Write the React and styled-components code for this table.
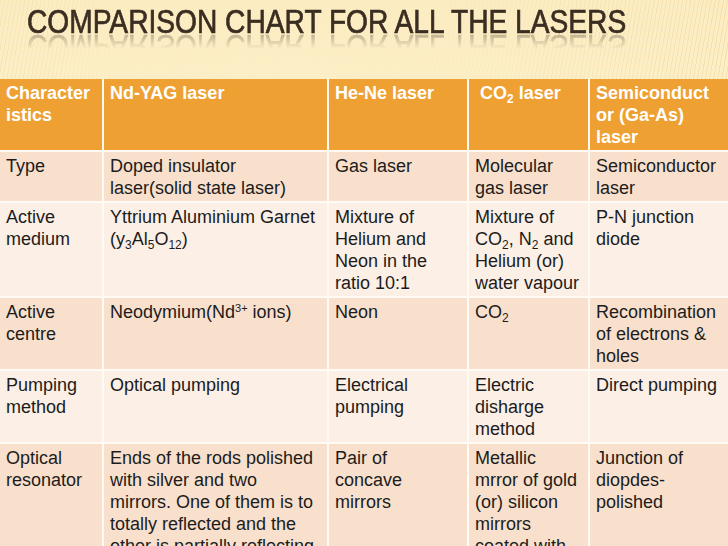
import React from "react";
import styled, { createGlobalStyle } from "styled-components";

const GlobalStyle = createGlobalStyle`
  html, body { margin: 0; padding: 0; }
  body {
    background: #fdf2ca;
    overflow: hidden;
    font-family: "Liberation Sans", Arial, sans-serif;
  }
`;

const Slide = styled.div`
  width: 728px;
  height: 546px;
  overflow: hidden;
  display: flex;
  flex-direction: column;
  background: linear-gradient(180deg, #fcecc2 0%, #fdf2cc 40%, #fdf3cf 100%);
`;

const TitleBar = styled.header`
  position: relative;
  height: 79px;
  flex: none;
  box-sizing: border-box;
  padding: 4px 0 0 27px;
  overflow: hidden;

  &::before {
    content: "";
    position: absolute;
    inset: 0;
    background: repeating-linear-gradient(
      100deg,
      rgba(222, 186, 112, 0.3) 0 1px,
      transparent 1px 4px
    );
    -webkit-mask-image: linear-gradient(
      90deg,
      rgba(0, 0, 0, 0.6) 0%,
      rgba(0, 0, 0, 0.1) 14%,
      rgba(0, 0, 0, 0) 40%,
      rgba(0, 0, 0, 0.15) 66%,
      rgba(0, 0, 0, 0.8) 100%
    );
    mask-image: linear-gradient(
      90deg,
      rgba(0, 0, 0, 0.6) 0%,
      rgba(0, 0, 0, 0.1) 14%,
      rgba(0, 0, 0, 0) 40%,
      rgba(0, 0, 0, 0.15) 66%,
      rgba(0, 0, 0, 0.8) 100%
    );
  }
`;

const Title = styled.h1`
  position: relative;
  display: inline-block;
  margin: 0;
  font-family: "Liberation Sans", Arial, sans-serif;
  font-weight: 400;
  font-size: 34px;
  line-height: 34px;
  color: #3a2d21;
  -webkit-text-stroke: 0.7px #3a2d21;
  white-space: nowrap;
  transform: scaleX(0.828);
  transform-origin: left top;
  -webkit-box-reflect: below -8px
    linear-gradient(transparent 45%, rgba(0, 0, 0, 0.4));
`;

const Table = styled.table`
  width: 728px;
  table-layout: fixed;
  border-collapse: separate;
  border-spacing: 0;
  flex: none;
`;

const Col = styled.col`
  width: ${(p) => p.$w}px;
`;

const Row = styled.tr`
  background: ${(p) =>
    p.$kind === "head" ? "#efa033" : p.$kind === "dark" ? "#f8e0cd" : "#fbefe6"};
`;

const Cell = styled.td`
  box-sizing: border-box;
  vertical-align: top;
  padding: 3px 4px 2px 6px;
  border-bottom: 2px solid #fffaf4;
  border-left: 2px solid #fffaf4;
  font-size: 18px;
  line-height: 22px;
  color: #1c1c1c;
  font-weight: 400;

  &:first-child {
    border-left: none;
  }
`;

const HeadCell = styled(Cell).attrs({ as: "th" })`
  text-align: left;
  color: #ffffff;
  font-weight: 700;
`;

const Sub = styled.sub`
  font-size: 12px;
  line-height: 0;
  vertical-align: -4px;
`;

const Sup = styled.sup`
  font-size: 11px;
  line-height: 0;
  vertical-align: 6px;
`;

const widths = [102, 225, 140, 121, 140];

const rows = [
  {
    kind: "dark",
    cells: [
      <>Type</>,
      <>Doped insulator<br />laser(solid state laser)</>,
      <>Gas laser</>,
      <>Molecular<br />gas laser</>,
      <>Semiconductor<br />laser</>,
    ],
  },
  {
    kind: "light",
    cells: [
      <>Active<br />medium</>,
      <>
        Yttrium Aluminium Garnet<br />(y<Sub>3</Sub>Al<Sub>5</Sub>O<Sub>12</Sub>)
      </>,
      <>Mixture of<br />Helium and<br />Neon in the<br />ratio 10:1</>,
      <>
        Mixture of<br />CO<Sub>2</Sub>, N<Sub>2</Sub> and<br />Helium (or)<br />water vapour
      </>,
      <>P-N junction<br />diode</>,
    ],
  },
  {
    kind: "dark",
    cells: [
      <>Active<br />centre</>,
      <>Neodymium(Nd<Sup>3+</Sup> ions)</>,
      <>Neon</>,
      <>CO<Sub>2</Sub></>,
      <>Recombination<br />of electrons &amp;<br />holes</>,
    ],
  },
  {
    kind: "light",
    cells: [
      <>Pumping<br />method</>,
      <>Optical pumping</>,
      <>Electrical<br />pumping</>,
      <>Electric<br />disharge<br />method</>,
      <>Direct pumping</>,
    ],
  },
  {
    kind: "dark",
    cells: [
      <>Optical<br />resonator</>,
      <>
        Ends of the rods polished<br />with silver and two<br />mirrors. One of them is to
        <br />totally reflected and the<br />other is partially reflecting
      </>,
      <>Pair of<br />concave<br />mirrors</>,
      <>Metallic<br />mrror of gold<br />(or) silicon<br />mirrors<br />coated with</>,
      <>Junction of<br />diopdes-<br />polished</>,
    ],
  },
];

const headers = [
  <>Character<br />istics</>,
  <>Nd-YAG laser</>,
  <>He-Ne laser</>,
  <>{"\u00a0"}CO<Sub>2</Sub> laser</>,
  <>Semiconduct<br />or (Ga-As)<br />laser</>,
];

export default function App() {
  return (
    <>
      <GlobalStyle />
      <Slide>
        <TitleBar>
          <Title>COMPARISON CHART FOR ALL THE LASERS</Title>
        </TitleBar>
        <Table>
          <colgroup>
            {widths.map((w, i) => (
              <Col key={i} $w={w} />
            ))}
          </colgroup>
          <thead>
            <Row $kind="head">
              {headers.map((h, i) => (
                <HeadCell key={i}>{h}</HeadCell>
              ))}
            </Row>
          </thead>
          <tbody>
            {rows.map((r, ri) => (
              <Row key={ri} $kind={r.kind}>
                {r.cells.map((c, ci) => (
                  <Cell key={ci}>{c}</Cell>
                ))}
              </Row>
            ))}
          </tbody>
        </Table>
      </Slide>
    </>
  );
}
